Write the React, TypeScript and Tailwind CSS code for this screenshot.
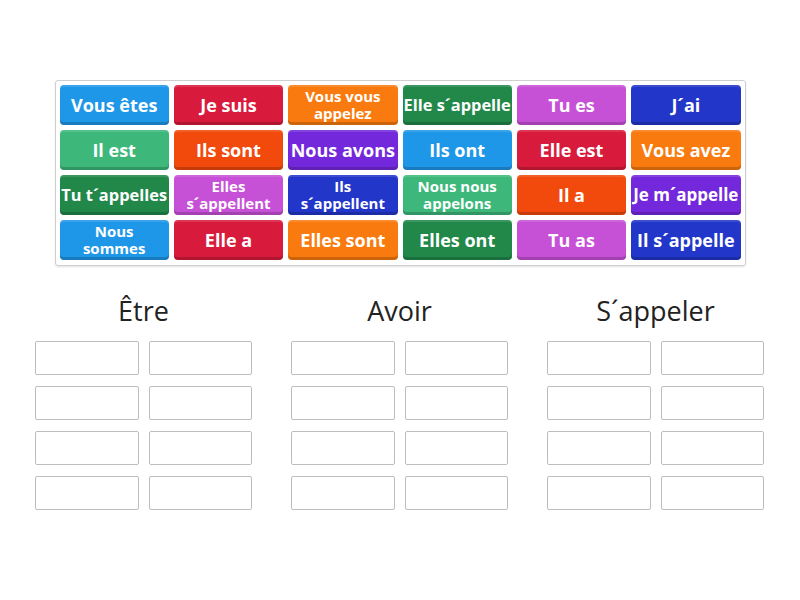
import React from "react";

// ---------- Data ----------
const colors: Record<string, string> = {
  blue: "bg-[#1f97e8]",
  red: "bg-[#d81b3c]",
  orange: "bg-[#f97b0f]",
  dkgreen: "bg-[#22884a]",
  pink: "bg-[#c650d6]",
  dkblue: "bg-[#2236c9]",
  green: "bg-[#3db87a]",
  redorange: "bg-[#f2490c]",
  purple: "bg-[#7428db]",
};

// size: text class for single-line labels (long ones shrink to fit)
type Tile = { label: string[]; color: string; size?: string };

const tiles: Tile[] = [
  { label: ["Vous êtes"], color: "blue" },
  { label: ["Je suis"], color: "red" },
  { label: ["Vous vous", "appelez"], color: "orange" },
  { label: ["Elle s´appelle"], color: "dkgreen", size: "text-[16.4px]" },
  { label: ["Tu es"], color: "pink" },
  { label: ["J´ai"], color: "dkblue" },

  { label: ["Il est"], color: "green" },
  { label: ["Ils sont"], color: "redorange" },
  { label: ["Nous avons"], color: "purple" },
  { label: ["Ils ont"], color: "blue" },
  { label: ["Elle est"], color: "red" },
  { label: ["Vous avez"], color: "orange" },

  { label: ["Tu t´appelles"], color: "dkgreen", size: "text-[16.4px]" },
  { label: ["Elles", "s´appellent"], color: "pink" },
  { label: ["Ils", "s´appellent"], color: "dkblue" },
  { label: ["Nous nous", "appelons"], color: "green" },
  { label: ["Il a"], color: "redorange" },
  { label: ["Je m´appelle"], color: "purple", size: "text-[17px]" },

  { label: ["Nous", "sommes"], color: "blue" },
  { label: ["Elle a"], color: "red" },
  { label: ["Elles sont"], color: "orange" },
  { label: ["Elles ont"], color: "dkgreen" },
  { label: ["Tu as"], color: "pink" },
  { label: ["Il s´appelle"], color: "dkblue" },
];

const groups = ["Être", "Avoir", "S´appeler"];

// ---------- Component ----------
export default function App() {
  return (
    <div
      className="w-[800px] h-[600px] bg-white pt-[80px]"
      style={{ fontFamily: '"Open Sans", "Noto Sans", sans-serif' }}
    >
      {/* Tiles */}
      <div className="mx-auto w-[691px] h-[186px] border border-[#cfcfcf] rounded-[3px] p-[4px] shadow-[0_1px_2px_rgba(0,0,0,0.12)]">
        <div className="grid grid-cols-6 gap-x-[5px] gap-y-[5px]">
          {tiles.map((t, i) => (
            <div
              key={i}
              className={`${colors[t.color]} h-[40px] rounded-[4px] flex flex-col items-center justify-center text-white font-bold text-center whitespace-nowrap shadow-[inset_0_-3px_0_rgba(0,0,0,0.18),inset_0_2px_0_rgba(255,255,255,0.12)]`}
            >
              {t.label.length === 1 ? (
                <span className={`${t.size ?? "text-[18px]"} leading-[22px] pb-[1px]`}>
                  {t.label[0]}
                </span>
              ) : (
                t.label.map((l) => (
                  <span key={l} className="text-[15px] leading-[17px]">
                    {l}
                  </span>
                ))
              )}
            </div>
          ))}
        </div>
      </div>

      {/* Drop zones */}
      <div className="mt-[20px] ml-[35px] flex gap-x-[39px]">
        {groups.map((g) => (
          <div key={g} className="w-[217px] flex flex-col">
            <div className="h-[50px] text-center text-[27px] leading-[50px] text-[#222]">
              {g}
            </div>
            <div className="mt-[5px] grid grid-cols-2 gap-x-[10px] gap-y-[11px]">
              {Array.from({ length: 8 }, (_, i) => (
                <div
                  key={i}
                  className="h-[34px] border border-[#bdbdbd] rounded-[2px] bg-white"
                />
              ))}
            </div>
          </div>
        ))}
      </div>
    </div>
  );
}
